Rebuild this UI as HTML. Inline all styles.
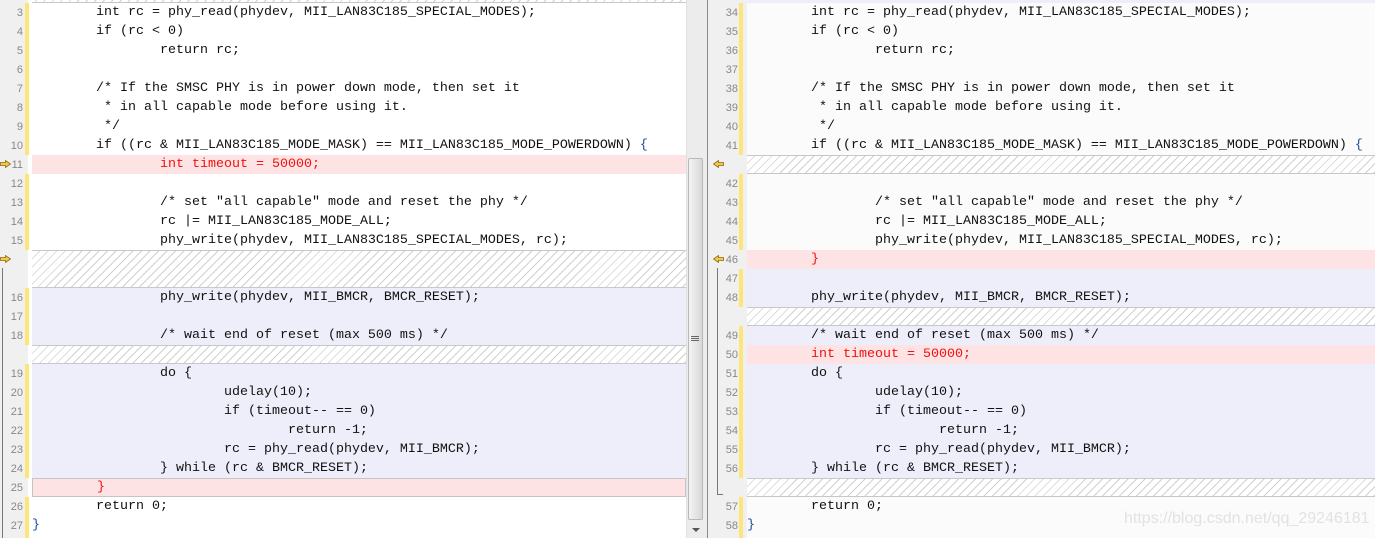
<!DOCTYPE html>
<html><head><meta charset="utf-8"><style>
*{margin:0;padding:0;box-sizing:border-box}
body{width:1375px;height:538px;overflow:hidden;background:#fff;position:relative;font-family:"Liberation Mono",monospace}
.g{position:absolute;top:0;height:538px;background:#f0f0f0}
.r{position:absolute;height:19px;font-size:13.33px;line-height:20px;white-space:pre;tab-size:8;-moz-tab-size:8;color:#111}
.L{left:32px;width:654px}
.R{left:747px;width:628px}
.w{background:#fbfbfb}
.pk{background:#fde3e3}
.lv{background:#eeeefb}
.h{background:repeating-linear-gradient(135deg,#fff 0 5px,#d0d0d0 5px 6px);border-top:1px solid #c8c8c8;border-bottom:1px solid #c8c8c8}
.red{color:#f01010}
.n{position:absolute;height:19px;font-family:"Liberation Sans",sans-serif;font-size:11px;line-height:20px;color:#888;text-align:right;width:20px}
.yb{position:absolute;width:4px;background:#fde57a}
.ar{position:absolute;width:11px;height:8px}
</style></head><body>
<div class="g" style="left:0;width:28px"></div>
<div style="position:absolute;left:686px;top:0;width:21px;height:538px;background:#ececec;border-left:1px solid #e0e0e0"></div>
<div style="position:absolute;left:688px;top:158px;width:15px;height:362px;background:linear-gradient(90deg,#f4f4f4,#d8d8d8);border:1px solid #b8b8b8;border-radius:2px"></div>
<div style="position:absolute;left:691px;top:336px;width:8px;height:1px;background:#666;box-shadow:0 2px #666,0 4px #666"></div>
<div style="position:absolute;left:692px;top:528px;width:0;height:0;border-left:4px solid transparent;border-right:4px solid transparent;border-top:4px solid #555"></div>
<div style="position:absolute;left:707px;top:0;width:1px;height:538px;background:#888"></div>
<div class="g" style="left:708px;width:39px"></div>
<div class="h" style="position:absolute;left:32px;top:-3px;width:654px;height:6px;border-top:none"></div>
<div style="position:absolute;left:747px;top:0;width:628px;height:3px;background:#eeeefb"></div>

<div class="r L" style="top:3px">	int rc = phy_read(phydev, MII_LAN83C185_SPECIAL_MODES);</div>
<div class="r L" style="top:22px">	if (rc &lt; 0)</div>
<div class="r L" style="top:41px">		return rc;</div>
<div class="r L" style="top:60px"></div>
<div class="r L" style="top:79px">	/* If the SMSC PHY is in power down mode, then set it</div>
<div class="r L" style="top:98px">	 * in all capable mode before using it.</div>
<div class="r L" style="top:117px">	 */</div>
<div class="r L" style="top:136px">	if ((rc &amp; MII_LAN83C185_MODE_MASK) == MII_LAN83C185_MODE_POWERDOWN) <span style="color:#1a4fa0">{</span></div>
<div class="r L pk red" style="top:155px">		int timeout = 50000;</div>
<div class="r L" style="top:174px"></div>
<div class="r L" style="top:193px">		/* set "all capable" mode and reset the phy */</div>
<div class="r L" style="top:212px">		rc |= MII_LAN83C185_MODE_ALL;</div>
<div class="r L" style="top:231px">		phy_write(phydev, MII_LAN83C185_SPECIAL_MODES, rc);</div>
<div class="r L h" style="top:250px;height:38px"></div>
<div class="r L lv" style="top:288px">		phy_write(phydev, MII_BMCR, BMCR_RESET);</div>
<div class="r L lv" style="top:307px"></div>
<div class="r L lv" style="top:326px">		/* wait end of reset (max 500 ms) */</div>
<div class="r L h" style="top:345px"></div>
<div class="r L lv" style="top:364px">		do {</div>
<div class="r L lv" style="top:383px">			udelay(10);</div>
<div class="r L lv" style="top:402px">			if (timeout-- == 0)</div>
<div class="r L lv" style="top:421px">				return -1;</div>
<div class="r L lv" style="top:440px">			rc = phy_read(phydev, MII_BMCR);</div>
<div class="r L lv" style="top:459px">		} while (rc &amp; BMCR_RESET);</div>
<div class="r L pk red" style="top:478px;border:1px solid #c4c4c4;line-height:18px">	}</div>
<div class="r L" style="top:497px">	return 0;</div>
<div class="r L" style="top:516px"><span style="color:#1a4fa0">}</span></div>

<div class="n" style="left:3px;top:3px">3</div><div class="n" style="left:3px;top:22px">4</div><div class="n" style="left:3px;top:41px">5</div><div class="n" style="left:3px;top:60px">6</div><div class="n" style="left:3px;top:79px">7</div><div class="n" style="left:3px;top:98px">8</div><div class="n" style="left:3px;top:117px">9</div><div class="n" style="left:3px;top:136px">10</div><div class="n" style="left:3px;top:155px">11</div><div class="n" style="left:3px;top:174px">12</div><div class="n" style="left:3px;top:193px">13</div><div class="n" style="left:3px;top:212px">14</div><div class="n" style="left:3px;top:231px">15</div><div class="n" style="left:3px;top:288px">16</div><div class="n" style="left:3px;top:307px">17</div><div class="n" style="left:3px;top:326px">18</div><div class="n" style="left:3px;top:364px">19</div><div class="n" style="left:3px;top:383px">20</div><div class="n" style="left:3px;top:402px">21</div><div class="n" style="left:3px;top:421px">22</div><div class="n" style="left:3px;top:440px">23</div><div class="n" style="left:3px;top:459px">24</div><div class="n" style="left:3px;top:478px">25</div><div class="n" style="left:3px;top:497px">26</div><div class="n" style="left:3px;top:516px">27</div>
<div class="yb" style="left:25px;top:3px;height:152px"></div>
<div class="yb" style="left:25px;top:174px;height:76px"></div>
<div class="yb" style="left:25px;top:288px;height:57px"></div>
<div class="yb" style="left:25px;top:364px;height:114px"></div>
<div class="yb" style="left:25px;top:497px;height:41px"></div>
<div style="position:absolute;left:2px;top:268px;width:1px;height:270px;background:#777"></div>
<svg class="ar" style="left:0;top:160px" viewBox="0 0 11 8"><path d="M0.5 2.5H5.5V0.5L10.5 4L5.5 7.5V5.5H0.5Z" fill="#f4c84a" stroke="#8a6a10" stroke-width="0.8"/></svg>
<svg class="ar" style="left:0;top:255px" viewBox="0 0 11 8"><path d="M0.5 2.5H5.5V0.5L10.5 4L5.5 7.5V5.5H0.5Z" fill="#f4c84a" stroke="#8a6a10" stroke-width="0.8"/></svg>

<div class="r R w" style="top:3px">	int rc = phy_read(phydev, MII_LAN83C185_SPECIAL_MODES);</div>
<div class="r R w" style="top:22px">	if (rc &lt; 0)</div>
<div class="r R w" style="top:41px">		return rc;</div>
<div class="r R w" style="top:60px"></div>
<div class="r R w" style="top:79px">	/* If the SMSC PHY is in power down mode, then set it</div>
<div class="r R w" style="top:98px">	 * in all capable mode before using it.</div>
<div class="r R w" style="top:117px">	 */</div>
<div class="r R w" style="top:136px">	if ((rc &amp; MII_LAN83C185_MODE_MASK) == MII_LAN83C185_MODE_POWERDOWN) <span style="color:#1a4fa0">{</span></div>
<div class="r R h" style="top:155px"></div>
<div class="r R w" style="top:174px"></div>
<div class="r R w" style="top:193px">		/* set "all capable" mode and reset the phy */</div>
<div class="r R w" style="top:212px">		rc |= MII_LAN83C185_MODE_ALL;</div>
<div class="r R w" style="top:231px">		phy_write(phydev, MII_LAN83C185_SPECIAL_MODES, rc);</div>
<div class="r R pk red" style="top:250px">	}</div>
<div class="r R lv" style="top:269px"></div>
<div class="r R lv" style="top:288px">	phy_write(phydev, MII_BMCR, BMCR_RESET);</div>
<div class="r R h" style="top:307px"></div>
<div class="r R lv" style="top:326px">	/* wait end of reset (max 500 ms) */</div>
<div class="r R pk red" style="top:345px">	int timeout = 50000;</div>
<div class="r R lv" style="top:364px">	do {</div>
<div class="r R lv" style="top:383px">		udelay(10);</div>
<div class="r R lv" style="top:402px">		if (timeout-- == 0)</div>
<div class="r R lv" style="top:421px">			return -1;</div>
<div class="r R lv" style="top:440px">		rc = phy_read(phydev, MII_BMCR);</div>
<div class="r R lv" style="top:459px">	} while (rc &amp; BMCR_RESET);</div>
<div class="r R h" style="top:478px"></div>
<div class="r R w" style="top:497px">	return 0;</div>
<div class="r R w" style="top:516px;height:22px"><span style="color:#1a4fa0">}</span></div>
<div style="position:absolute;left:1124px;top:510px;font-family:'Liberation Sans',sans-serif;font-size:16px;line-height:18px;color:#e2e2e2;white-space:nowrap">https://blog.csdn.net/qq_29246181</div>

<div class="n" style="left:718px;top:3px">34</div><div class="n" style="left:718px;top:22px">35</div><div class="n" style="left:718px;top:41px">36</div><div class="n" style="left:718px;top:60px">37</div><div class="n" style="left:718px;top:79px">38</div><div class="n" style="left:718px;top:98px">39</div><div class="n" style="left:718px;top:117px">40</div><div class="n" style="left:718px;top:136px">41</div><div class="n" style="left:718px;top:174px">42</div><div class="n" style="left:718px;top:193px">43</div><div class="n" style="left:718px;top:212px">44</div><div class="n" style="left:718px;top:231px">45</div><div class="n" style="left:718px;top:250px">46</div><div class="n" style="left:718px;top:269px">47</div><div class="n" style="left:718px;top:288px">48</div><div class="n" style="left:718px;top:326px">49</div><div class="n" style="left:718px;top:345px">50</div><div class="n" style="left:718px;top:364px">51</div><div class="n" style="left:718px;top:383px">52</div><div class="n" style="left:718px;top:402px">53</div><div class="n" style="left:718px;top:421px">54</div><div class="n" style="left:718px;top:440px">55</div><div class="n" style="left:718px;top:459px">56</div><div class="n" style="left:718px;top:497px">57</div><div class="n" style="left:718px;top:516px">58</div>
<div class="yb" style="left:739px;top:3px;height:152px"></div>
<div class="yb" style="left:739px;top:174px;height:76px"></div>
<div class="yb" style="left:739px;top:269px;height:38px"></div>
<div class="yb" style="left:739px;top:326px;height:152px"></div>
<div class="yb" style="left:739px;top:497px;height:41px"></div>
<div style="position:absolute;left:717px;top:268px;width:1px;height:226px;background:#777"></div>
<div style="position:absolute;left:717px;top:494px;width:6px;height:1px;background:#777"></div>
<svg class="ar" style="left:713px;top:160px" viewBox="0 0 11 8"><path d="M10.5 2.5H5.5V0.5L0.5 4L5.5 7.5V5.5H10.5Z" fill="#f4c84a" stroke="#8a6a10" stroke-width="0.8"/></svg>
<svg class="ar" style="left:713px;top:255px" viewBox="0 0 11 8"><path d="M10.5 2.5H5.5V0.5L0.5 4L5.5 7.5V5.5H10.5Z" fill="#f4c84a" stroke="#8a6a10" stroke-width="0.8"/></svg>
</body></html>
